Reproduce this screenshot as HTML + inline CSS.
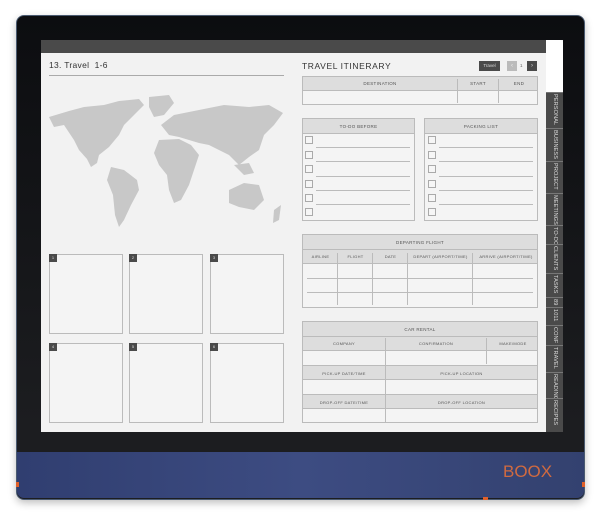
<!DOCTYPE html><html><head><style>
*{margin:0;padding:0;box-sizing:border-box}
body{width:600px;height:516px;background:#fff;position:relative;overflow:hidden;font-family:"Liberation Sans",sans-serif}
.a{position:absolute}
.dev{left:16px;top:15px;width:569px;height:485px;border-radius:8px;background:linear-gradient(#0c0d10,#1c1d20 85%);border:1px solid #4a5a70;box-shadow:0 3px 8px rgba(0,0,0,.25)}
.band{left:17px;top:452px;width:567px;height:46px;background:linear-gradient(90deg,#303e70,#3d4c82 50%,#33416f);border-radius:0 0 7px 7px}
.scr{left:41px;top:40px;width:522px;height:392px;background:#f2f2f2}
.bar{left:41px;top:40px;width:505px;height:13px;background:#4a4a4a}
.box{border:1px solid #bbb;background:#f4f4f4}
.hd{background:#ddd;border-bottom:1px solid #bbb;font-size:4.5px;color:#555;text-align:center;letter-spacing:.3px}
.tab{position:absolute;left:546px;width:17px;background:#4a4a4a;border-top:1px solid #777;color:#ddd;font-size:5.6px;writing-mode:vertical-rl;line-height:17px;white-space:nowrap;overflow:hidden;padding-top:1px;letter-spacing:.1px}
.cb{position:absolute;width:8px;height:8px;border:1px solid #aaa;background:#f6f6f6}
.ln{position:absolute;height:1px;background:#bbb}
.vl{position:absolute;width:1px;background:#bbb}
.nb{position:absolute;width:74px;height:80px;border:1px solid #bbb;background:#f4f4f4}
.nb span{position:absolute;left:-1px;top:-1px;width:8px;height:8px;background:#4a4a4a;color:#ddd;font-size:4px;text-align:center;line-height:8px}
</style></head><body>
<div class="a dev"></div>
<div class="a band"></div>
<div class="a" style="left:503px;top:462px;color:#d06a40;font-size:17px;letter-spacing:0px">BOOX</div>
<div class="a" style="left:16px;top:482px;width:3px;height:5px;background:#e0602a"></div>
<div class="a" style="left:582px;top:482px;width:3px;height:5px;background:#e0602a"></div>
<div class="a" style="left:483px;top:497px;width:5px;height:3px;background:#e0602a"></div>
<div class="a scr"></div>
<div class="a bar"></div>
<div class="a" style="left:546px;top:40px;width:17px;height:52px;background:#fff;border-radius:0 3px 0 0"></div>
<div class="tab" style="top:92px;height:36px">PERSONAL</div>
<div class="tab" style="top:128px;height:33px">BUSINESS</div>
<div class="tab" style="top:161px;height:32px">PROJECT</div>
<div class="tab" style="top:193px;height:32px">MEETINGS</div>
<div class="tab" style="top:225px;height:19px">TO-DO</div>
<div class="tab" style="top:244px;height:29px">CLIENTS</div>
<div class="tab" style="top:273px;height:24px">TASKS</div>
<div class="tab" style="top:297px;height:10px">89</div>
<div class="tab" style="top:307px;height:18px">1011</div>
<div class="tab" style="top:325px;height:20px">CONF</div>
<div class="tab" style="top:345px;height:27px">TRAVEL</div>
<div class="tab" style="top:372px;height:26px">READING</div>
<div class="tab" style="top:398px;height:34px">RECIPES</div>

<div class="a" style="left:49px;top:60px;font-size:8.5px;color:#333;letter-spacing:.3px">13. Travel&nbsp; 1-6</div>
<div class="a" style="left:49px;top:75px;width:235px;height:1px;background:#aaa"></div>
<svg class="a" style="left:49px;top:95px" width="235" height="135" viewBox="0 0 235 135" fill="#c8c8c8">
<path d="M0 22 L20 16 L35 12 L55 10 L70 6 L90 4 L95 10 L85 20 L75 30 L70 40 L60 52 L50 60 L48 68 L42 72 L38 64 L30 55 L25 45 L15 30 L5 32 Z"/>
<path d="M100 2 L120 0 L125 8 L115 20 L105 22 L100 12 Z"/>
<path d="M62 72 L75 75 L88 85 L90 95 L82 110 L75 125 L70 132 L66 120 L64 100 L58 85 Z"/>
<path d="M112 30 L125 20 L150 15 L175 10 L200 12 L220 10 L234 18 L225 30 L215 40 L210 55 L200 62 L190 70 L180 60 L170 55 L160 50 L150 48 L140 45 L130 42 L120 40 Z"/>
<path d="M110 45 L130 44 L142 50 L150 60 L145 75 L140 90 L132 105 L125 108 L120 95 L118 80 L110 70 L105 58 Z"/>
<path d="M185 70 L200 68 L205 78 L195 80 Z"/>
<path d="M180 95 L195 88 L210 90 L215 105 L205 115 L190 112 L180 108 Z"/>
<path d="M225 115 L232 110 L230 125 L224 128 Z"/>
</svg>
<div class="nb" style="left:49px;top:254px"><span>1</span></div>
<div class="nb" style="left:129px;top:254px"><span>2</span></div>
<div class="nb" style="left:210px;top:254px"><span>3</span></div>
<div class="nb" style="left:49px;top:343px"><span>4</span></div>
<div class="nb" style="left:129px;top:343px"><span>5</span></div>
<div class="nb" style="left:210px;top:343px"><span>6</span></div>

<div class="a" style="left:302px;top:61px;font-size:8.5px;color:#333;letter-spacing:.6px">TRAVEL ITINERARY</div>
<div class="a" style="left:479px;top:61px;width:21px;height:10px;background:#4a4a4a;color:#ddd;font-size:4.5px;text-align:center;line-height:10px">Travel</div>
<div class="a" style="left:507px;top:61px;width:10px;height:10px;background:#bbb;color:#eee;font-size:6px;text-align:center;line-height:10px">‹</div>
<div class="a" style="left:520px;top:63px;font-size:4.5px;color:#666">1</div>
<div class="a" style="left:527px;top:61px;width:10px;height:10px;background:#4a4a4a;color:#ddd;font-size:6px;text-align:center;line-height:10px">›</div>

<div class="a box" style="left:302px;top:76px;width:236px;height:29px">
<div class="hd" style="height:14px;line-height:14px;position:relative"><span style="position:absolute;left:0;width:154px">DESTINATION</span><span style="position:absolute;left:155px;width:40px">START</span><span style="position:absolute;left:196px;width:40px">END</span></div>
<div class="vl" style="left:154px;top:2px;height:24px"></div><div class="vl" style="left:195px;top:2px;height:24px"></div>
</div>

<div class="a box" style="left:302px;top:118px;width:113px;height:103px">
<div class="hd" style="height:15px;line-height:15px">TO-DO BEFORE</div>
</div>
<div class="a box" style="left:424px;top:118px;width:114px;height:103px">
<div class="hd" style="height:15px;line-height:15px">PACKING LIST</div>
</div>

<div class="a box" style="left:302px;top:234px;width:236px;height:74px">
<div class="hd" style="height:15px;line-height:15px">DEPARTING FLIGHT</div>
<div class="hd" style="height:14px;line-height:14px;position:relative;font-size:4px"><span style="position:absolute;left:0;width:35px">AIRLINE</span><span style="position:absolute;left:35px;width:35px">FLIGHT</span><span style="position:absolute;left:70px;width:35px">DATE</span><span style="position:absolute;left:105px;width:65px">DEPART (AIRPORT/TIME)</span><span style="position:absolute;left:170px;width:66px">ARRIVE (AIRPORT/TIME)</span></div>
<div class="vl" style="left:34px;top:18px;height:52px"></div><div class="vl" style="left:69px;top:18px;height:52px"></div><div class="vl" style="left:104px;top:18px;height:52px"></div><div class="vl" style="left:169px;top:18px;height:52px"></div>
<div class="ln" style="left:4px;top:43px;width:226px"></div><div class="ln" style="left:4px;top:57px;width:226px"></div>
</div>

<div class="a box" style="left:302px;top:321px;width:236px;height:102px">
<div class="hd" style="height:15px;line-height:15px">CAR RENTAL</div>
<div class="hd" style="height:14px;line-height:14px;position:relative;font-size:4px"><span style="position:absolute;left:0;width:82px">COMPANY</span><span style="position:absolute;left:83px;width:100px">CONFIRMATION</span><span style="position:absolute;left:184px;width:52px">MAKE/MODE</span></div>
<div class="hd" style="position:absolute;top:43px;left:0;width:234px;height:15px;line-height:15px;font-size:4px;border-top:1px solid #bbb"><span style="position:absolute;left:0;width:82px">PICK-UP DATE/TIME</span><span style="position:absolute;left:83px;width:151px">PICK-UP LOCATION</span></div>
<div class="hd" style="position:absolute;top:72px;left:0;width:234px;height:15px;line-height:15px;font-size:4px;border-top:1px solid #bbb"><span style="position:absolute;left:0;width:82px">DROP-OFF DATE/TIME</span><span style="position:absolute;left:83px;width:151px">DROP-OFF LOCATION</span></div>
<div class="vl" style="left:82px;top:16px;height:84px"></div>
<div class="vl" style="left:183px;top:16px;height:26px"></div>
</div>

<div class="cb" style="left:305px;top:136px"></div><div class="ln" style="left:316px;top:147px;width:94px"></div>
<div class="cb" style="left:305px;top:151px"></div><div class="ln" style="left:316px;top:161px;width:94px"></div>
<div class="cb" style="left:305px;top:165px"></div><div class="ln" style="left:316px;top:176px;width:94px"></div>
<div class="cb" style="left:305px;top:180px"></div><div class="ln" style="left:316px;top:190px;width:94px"></div>
<div class="cb" style="left:305px;top:194px"></div><div class="ln" style="left:316px;top:204px;width:94px"></div>
<div class="cb" style="left:305px;top:208px"></div>
<div class="cb" style="left:428px;top:136px"></div><div class="ln" style="left:439px;top:147px;width:94px"></div>
<div class="cb" style="left:428px;top:151px"></div><div class="ln" style="left:439px;top:161px;width:94px"></div>
<div class="cb" style="left:428px;top:165px"></div><div class="ln" style="left:439px;top:176px;width:94px"></div>
<div class="cb" style="left:428px;top:180px"></div><div class="ln" style="left:439px;top:190px;width:94px"></div>
<div class="cb" style="left:428px;top:194px"></div><div class="ln" style="left:439px;top:204px;width:94px"></div>
<div class="cb" style="left:428px;top:208px"></div>
</body></html>
